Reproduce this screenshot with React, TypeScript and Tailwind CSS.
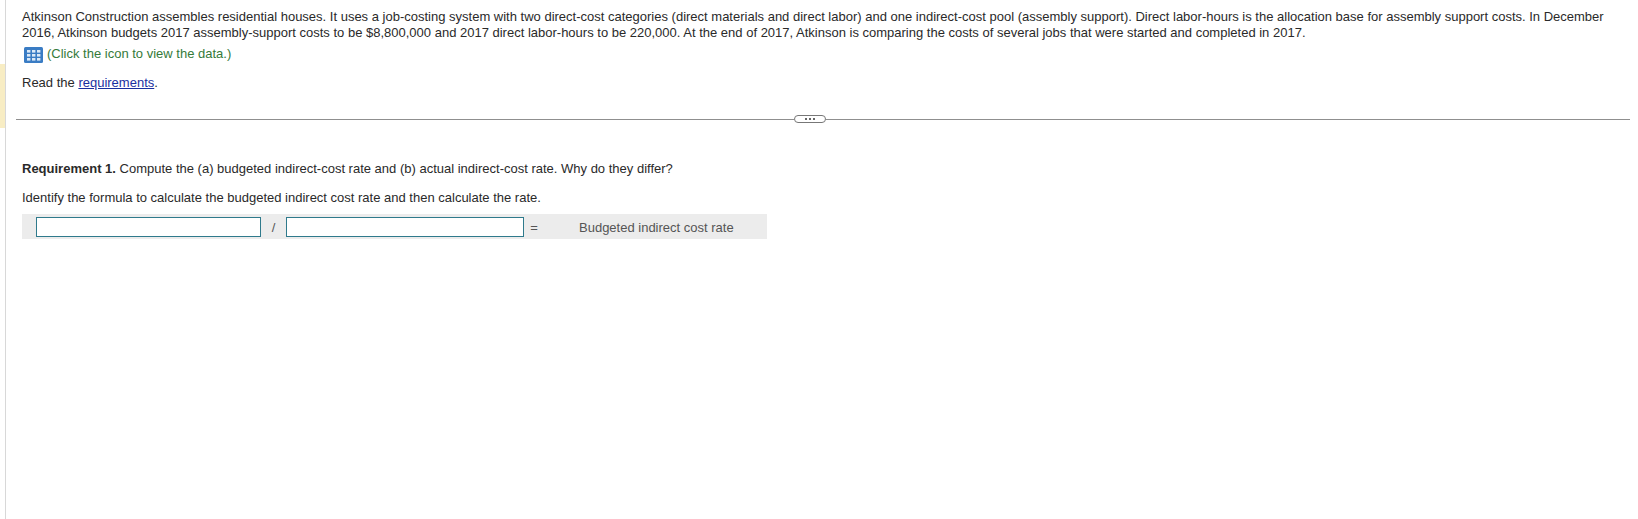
export default function App() {
  return (
    <div className="flex h-[519px] w-[1638px] bg-white font-['Liberation_Sans',Arial,sans-serif] text-[13px] leading-[16px] text-[#2a2a2a]">
      <div className="flex w-[6px] shrink-0 flex-col border-r border-[#d8d8d8] pt-[64px]">
        <div className="h-[64px] bg-[#f8edc4]" />
      </div>
      <div className="min-w-0 flex-1 pt-[9px]">
        <div className="pl-[16px] pr-[20px]">
          <p>
            Atkinson Construction assembles residential houses. It uses a job-costing system with two direct-cost categories (direct materials and direct labor) and one indirect-cost pool (assembly support). Direct labor-hours is the allocation base for assembly support costs. In December 2016, Atkinson budgets 2017 assembly-support costs to be $8,800,000 and 2017 direct labor-hours to be 220,000. At the end of 2017, Atkinson is comparing the costs of several jobs that were started and completed in 2017.
          </p>
          <div className="mt-[5px] flex h-[16px] items-center gap-[4px] text-[#357a3a]">
            <svg width="19" height="16" viewBox="0 0 19 16" className="ml-[2px] mt-[2px] shrink-0">
              <rect x="0" y="0" width="19" height="16" rx="1.5" fill="#3a7cc4" />
              {[3, 8, 13].map((x) =>
                [3, 7, 11].map((y) => <rect key={`${x}-${y}`} x={x} y={y} width="3.4" height="2.6" fill="#dbe9f7" />),
              )}
            </svg>
            <span>(Click the icon to view the data.)</span>
          </div>
          <p className="mt-[13px]">
            Read the <a className="text-[#1a2fa0] underline">requirements</a>.
          </p>
        </div>
        <div className="ml-[10px] mt-[24px] flex items-center pr-[8px]">
          <div className="h-px flex-1 bg-[#8f8f8f]" />
          <div className="flex h-[8px] w-[32px] items-center justify-center gap-[2px] rounded-full border border-[#777] bg-white">
            <span className="h-[2px] w-[2px] bg-[#666]" />
            <span className="h-[2px] w-[2px] bg-[#666]" />
            <span className="h-[2px] w-[2px] bg-[#666]" />
          </div>
          <div className="h-px w-[804px] bg-[#8f8f8f]" />
        </div>
        <div className="pl-[16px] pt-[38px]">
          <p>
            <b>Requirement 1.</b> Compute the (a) budgeted indirect-cost rate and (b) actual indirect-cost rate. Why do they differ?
          </p>
          <p className="mt-[13px]">Identify the formula to calculate the budgeted indirect cost rate and then calculate the rate.</p>
          <div className="mt-[8px] flex h-[25px] w-[745px] items-center bg-[#ececec] pl-[14px] text-[#555]">
            <div className="h-[20px] w-[225px] border border-[#2f7a8c] bg-white" />
            <span className="w-[25px] pt-[2px] text-center">/</span>
            <div className="h-[20px] w-[238px] border border-[#2f7a8c] bg-white" />
            <span className="w-[20px] pt-[2px] text-center">=</span>
            <span className="ml-[35px] pt-[2px]">Budgeted indirect cost rate</span>
          </div>
        </div>
      </div>
    </div>
  );
}
